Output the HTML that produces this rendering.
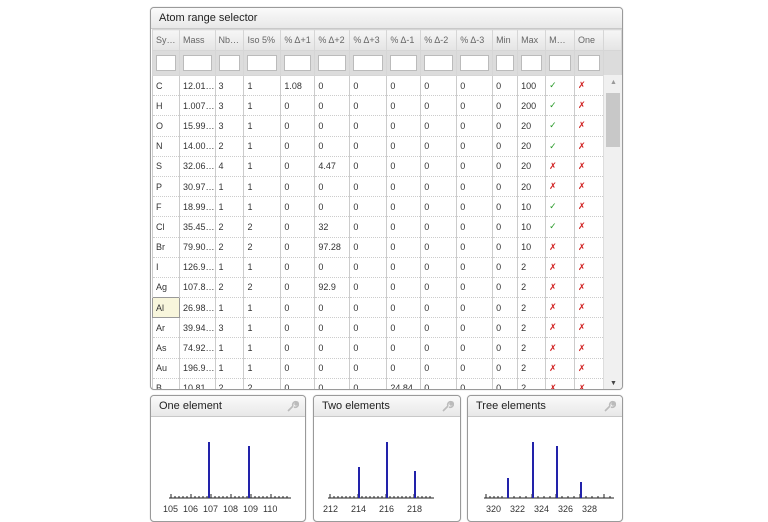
<!DOCTYPE html>
<html><head><meta charset="utf-8"><style>
body{margin:0;width:768px;height:512px;background:#fff;font-family:"Liberation Sans",sans-serif;overflow:hidden;position:relative}
.panel{position:absolute;border:1px solid #9a9a9a;border-radius:4px;background:#fff;overflow:hidden;box-shadow:0 0 1px #bbb}
.ph{height:20px;line-height:20px;background:linear-gradient(#fafafa,#e8e8e8);border-bottom:1px solid #c8c8c8;font-size:11px;color:#222;padding-left:8px;position:relative}
.wr{position:absolute;right:6px;top:4px}
table{border-collapse:collapse;table-layout:fixed;font-size:9px;color:#333;position:absolute;left:1px;top:21px}
td,th{border:1px solid #d6d6d6;padding:0 0 0 3px;white-space:nowrap;overflow:hidden;text-align:left;font-weight:normal}
th{height:20px;background:linear-gradient(#f6f6f6,#e4e4e4);color:#666}
tr.f td{height:24px;background:#dcdcdc;padding:0 3px}
tr.f div{background:#fff;border:1px solid #bbb;height:14px}
tr.d td{height:19.2px;border-style:dotted solid;border-color:#ccc}
.ok{color:#2a9a2a}.no{color:#d02020}
.sb{position:absolute;z-index:5;left:452px;top:67px;width:18px;height:314px;background:#f0f0f0;border-left:1px solid #ddd}
</style></head><body>
<div class="panel" style="left:150px;top:7px;width:471px;height:381px">
<div class="ph">Atom range selector</div>
<table>
<colgroup><col style="width:27px"><col style="width:35px"><col style="width:29px"><col style="width:37px"><col style="width:34px"><col style="width:35px"><col style="width:37px"><col style="width:34px"><col style="width:36px"><col style="width:36px"><col style="width:25px"><col style="width:28px"><col style="width:29px"><col style="width:29px"><col style="width:18px"></colgroup>
<tr><th>Sy…</th><th>Mass</th><th>Nb…</th><th>Iso 5%</th><th>% Δ+1</th><th>% Δ+2</th><th>% Δ+3</th><th>% Δ-1</th><th>% Δ-2</th><th>% Δ-3</th><th>Min</th><th>Max</th><th>M…</th><th>One</th><th></th></tr>
<tr class="f"><td><div></div></td><td><div></div></td><td><div></div></td><td><div></div></td><td><div></div></td><td><div></div></td><td><div></div></td><td><div></div></td><td><div></div></td><td><div></div></td><td><div></div></td><td><div></div></td><td><div></div></td><td><div></div></td><td></td></tr>
<tr class="d"><td>C</td><td>12.01…</td><td>3</td><td>1</td><td>1.08</td><td>0</td><td>0</td><td>0</td><td>0</td><td>0</td><td>0</td><td>100</td><td class="ok">✓</td><td class="no">✗</td><td></td></tr>
<tr class="d"><td>H</td><td>1.007…</td><td>3</td><td>1</td><td>0</td><td>0</td><td>0</td><td>0</td><td>0</td><td>0</td><td>0</td><td>200</td><td class="ok">✓</td><td class="no">✗</td><td></td></tr>
<tr class="d"><td>O</td><td>15.99…</td><td>3</td><td>1</td><td>0</td><td>0</td><td>0</td><td>0</td><td>0</td><td>0</td><td>0</td><td>20</td><td class="ok">✓</td><td class="no">✗</td><td></td></tr>
<tr class="d"><td>N</td><td>14.00…</td><td>2</td><td>1</td><td>0</td><td>0</td><td>0</td><td>0</td><td>0</td><td>0</td><td>0</td><td>20</td><td class="ok">✓</td><td class="no">✗</td><td></td></tr>
<tr class="d"><td>S</td><td>32.06…</td><td>4</td><td>1</td><td>0</td><td>4.47</td><td>0</td><td>0</td><td>0</td><td>0</td><td>0</td><td>20</td><td class="no">✗</td><td class="no">✗</td><td></td></tr>
<tr class="d"><td>P</td><td>30.97…</td><td>1</td><td>1</td><td>0</td><td>0</td><td>0</td><td>0</td><td>0</td><td>0</td><td>0</td><td>20</td><td class="no">✗</td><td class="no">✗</td><td></td></tr>
<tr class="d"><td>F</td><td>18.99…</td><td>1</td><td>1</td><td>0</td><td>0</td><td>0</td><td>0</td><td>0</td><td>0</td><td>0</td><td>10</td><td class="ok">✓</td><td class="no">✗</td><td></td></tr>
<tr class="d"><td>Cl</td><td>35.45…</td><td>2</td><td>2</td><td>0</td><td>32</td><td>0</td><td>0</td><td>0</td><td>0</td><td>0</td><td>10</td><td class="ok">✓</td><td class="no">✗</td><td></td></tr>
<tr class="d"><td>Br</td><td>79.90…</td><td>2</td><td>2</td><td>0</td><td>97.28</td><td>0</td><td>0</td><td>0</td><td>0</td><td>0</td><td>10</td><td class="no">✗</td><td class="no">✗</td><td></td></tr>
<tr class="d"><td>I</td><td>126.9…</td><td>1</td><td>1</td><td>0</td><td>0</td><td>0</td><td>0</td><td>0</td><td>0</td><td>0</td><td>2</td><td class="no">✗</td><td class="no">✗</td><td></td></tr>
<tr class="d"><td>Ag</td><td>107.8…</td><td>2</td><td>2</td><td>0</td><td>92.9</td><td>0</td><td>0</td><td>0</td><td>0</td><td>0</td><td>2</td><td class="no">✗</td><td class="no">✗</td><td></td></tr>
<tr class="d"><td style="background:#f8f6dc;border:1px solid #999">Al</td><td>26.98…</td><td>1</td><td>1</td><td>0</td><td>0</td><td>0</td><td>0</td><td>0</td><td>0</td><td>0</td><td>2</td><td class="no">✗</td><td class="no">✗</td><td></td></tr>
<tr class="d"><td>Ar</td><td>39.94…</td><td>3</td><td>1</td><td>0</td><td>0</td><td>0</td><td>0</td><td>0</td><td>0</td><td>0</td><td>2</td><td class="no">✗</td><td class="no">✗</td><td></td></tr>
<tr class="d"><td>As</td><td>74.92…</td><td>1</td><td>1</td><td>0</td><td>0</td><td>0</td><td>0</td><td>0</td><td>0</td><td>0</td><td>2</td><td class="no">✗</td><td class="no">✗</td><td></td></tr>
<tr class="d"><td>Au</td><td>196.9…</td><td>1</td><td>1</td><td>0</td><td>0</td><td>0</td><td>0</td><td>0</td><td>0</td><td>0</td><td>2</td><td class="no">✗</td><td class="no">✗</td><td></td></tr>
<tr class="d"><td>B</td><td>10.81…</td><td>2</td><td>2</td><td>0</td><td>0</td><td>0</td><td>24.84</td><td>0</td><td>0</td><td>0</td><td>2</td><td class="no">✗</td><td class="no">✗</td><td></td></tr>
</table>
<div class="sb"><div style="position:absolute;top:4px;left:6px;color:#999;font-size:7px">▲</div><div style="position:absolute;top:18px;left:2px;width:14px;height:54px;background:#c8c8c8"></div><div style="position:absolute;bottom:2px;left:6px;color:#444;font-size:7px">▼</div></div>
</div>

<div class="panel" style="left:150px;top:395px;width:154px;height:125px"><div class="ph">One element<svg class="wr" width="12" height="12" viewBox="0 0 12 12"><path d="M1 11L6 6M6 6a3 3 0 0 1 4-4l-2 2 1 1 2-2a3 3 0 0 1-4 4" stroke="#bbb" stroke-width="1.6" fill="none"/></svg></div>
<svg width="154" height="100" style="position:absolute;left:0;top:21px" font-family="Liberation Sans" font-size="9" fill="#333">
<line x1="18" y1="81" x2="140" y2="81" stroke="#222"/>
<g stroke="#222"><path d="M20 81v-4M24 81v-2M28 81v-2M32 81v-2M36 81v-2M40 81v-4M44 81v-2M48 81v-2M52 81v-2M56 81v-2M60 81v-4M64 81v-2M68 81v-2M72 81v-2M76 81v-2M80 81v-4M84 81v-2M88 81v-2M92 81v-2M96 81v-2M100 81v-4M104 81v-2M108 81v-2M112 81v-2M116 81v-2M120 81v-4M124 81v-2M128 81v-2M132 81v-2M136 81v-2"/></g>
<rect x="57" y="25" width="2" height="56" fill="#2222aa"/><rect x="97" y="29" width="2" height="52" fill="#2222aa"/>
<text x="12" y="95">105</text><text x="32" y="95">106</text><text x="52" y="95">107</text><text x="72" y="95">108</text><text x="92" y="95">109</text><text x="112" y="95">110</text></svg></div>

<div class="panel" style="left:313px;top:395px;width:146px;height:125px"><div class="ph">Two elements<svg class="wr" width="12" height="12" viewBox="0 0 12 12"><path d="M1 11L6 6M6 6a3 3 0 0 1 4-4l-2 2 1 1 2-2a3 3 0 0 1-4 4" stroke="#bbb" stroke-width="1.6" fill="none"/></svg></div>
<svg width="146" height="100" style="position:absolute;left:0;top:21px" font-family="Liberation Sans" font-size="9" fill="#333">
<line x1="14" y1="81" x2="120" y2="81" stroke="#222"/>
<g stroke="#222"><path d="M16 81v-4M20 81v-2M24 81v-2M28 81v-2M32 81v-2M36 81v-2M40 81v-2M44 81v-4M48 81v-2M52 81v-2M56 81v-2M60 81v-2M64 81v-2M68 81v-2M72 81v-4M76 81v-2M80 81v-2M84 81v-2M88 81v-2M92 81v-2M96 81v-2M100 81v-4M104 81v-2M108 81v-2M112 81v-2M116 81v-2"/></g>
<rect x="44" y="50" width="2" height="31" fill="#2222aa"/><rect x="72" y="25" width="2" height="56" fill="#2222aa"/><rect x="100" y="54" width="2" height="27" fill="#2222aa"/>
<text x="9" y="95">212</text><text x="37" y="95">214</text><text x="65" y="95">216</text><text x="93" y="95">218</text></svg></div>

<div class="panel" style="left:467px;top:395px;width:154px;height:125px"><div class="ph">Tree elements<svg class="wr" width="12" height="12" viewBox="0 0 12 12"><path d="M1 11L6 6M6 6a3 3 0 0 1 4-4l-2 2 1 1 2-2a3 3 0 0 1-4 4" stroke="#bbb" stroke-width="1.6" fill="none"/></svg></div>
<svg width="154" height="100" style="position:absolute;left:0;top:21px" font-family="Liberation Sans" font-size="9" fill="#333">
<line x1="16" y1="81" x2="146" y2="81" stroke="#222"/>
<g stroke="#222"><path d="M18 81v-4M22 81v-2M26 81v-2M30 81v-2M34 81v-2M40 81v-4M46 81v-2M52 81v-2M58 81v-2M64 81v-4M70 81v-2M76 81v-2M82 81v-2M88 81v-4M94 81v-2M100 81v-2M106 81v-2M112 81v-4M118 81v-2M124 81v-2M130 81v-2M136 81v-4M142 81v-2"/></g>
<rect x="39" y="61" width="2" height="20" fill="#2222aa"/><rect x="64" y="25" width="2" height="56" fill="#2222aa"/><rect x="88" y="29" width="2" height="52" fill="#2222aa"/><rect x="112" y="65" width="2" height="16" fill="#2222aa"/>
<text x="18" y="95">320</text><text x="42" y="95">322</text><text x="66" y="95">324</text><text x="90" y="95">326</text><text x="114" y="95">328</text></svg></div>
</body></html>
